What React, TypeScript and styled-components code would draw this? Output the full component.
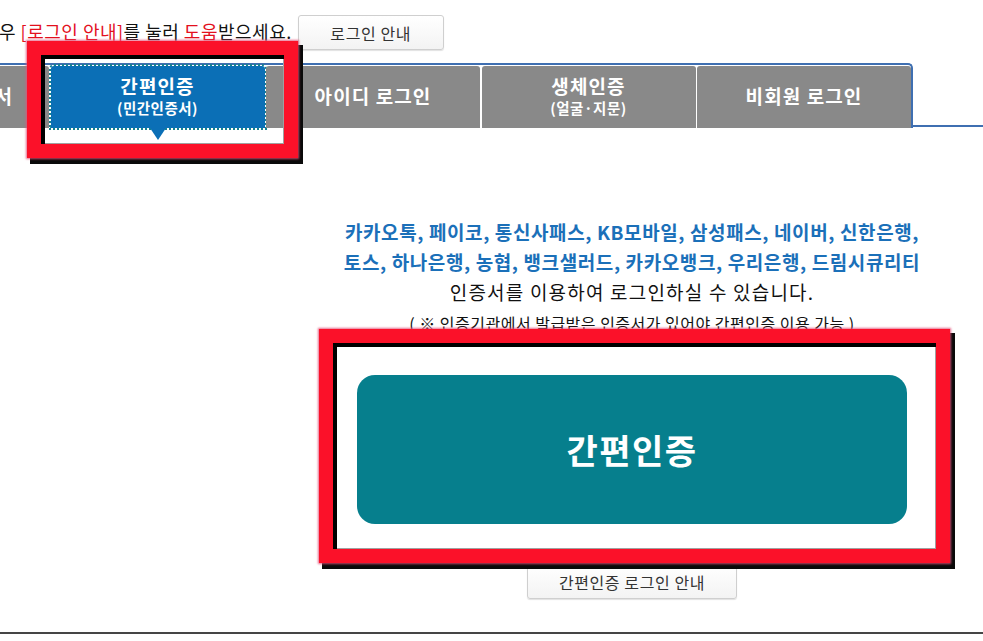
import React from "react";
import styled, { createGlobalStyle } from "styled-components";

const GlobalStyle = createGlobalStyle`
  html, body {
    margin: 0;
    padding: 0;
    background: #fff;
    overflow: hidden;
  }
  body {
    font-family: "Noto Sans CJK KR", "Noto Sans", sans-serif;
    color: #111;
  }
`;

const Page = styled.div`
  position: relative;
  width: 983px;
  height: 641px;
  overflow: hidden;
`;

const TopRow = styled.div`
  display: flex;
  align-items: center;
  gap: 6px;
  height: 35px;
  padding-top: 15px;
`;

const HelpText = styled.p`
  margin: -3px 0 0 -1px;
  font-size: 18px;
  line-height: 24px;
  white-space: nowrap;
  letter-spacing: 0.5px;
`;

const Red = styled.span`
  color: #e3101e;
`;

const GuideButton = styled.button<{ $w: number }>`
  width: ${(p) => p.$w}px;
  height: 35px;
  border: 1px solid #cfcfcf;
  border-radius: 3px;
  background: linear-gradient(#ffffff, #f3f3f3);
  box-shadow: 0 1px 1px rgba(0, 0, 0, 0.12);
  font-family: inherit;
  font-size: 16px;
  letter-spacing: 0.6px;
  color: #333;
  padding: 0;
  cursor: pointer;
`;

const TabBar = styled.div`
  display: flex;
  margin-top: 13px;
`;

const TabList = styled.ul`
  display: flex;
  gap: 1.5px;
  margin: 0 0 0 -165px;
  padding: 1px 0 0;
  list-style: none;
  border-top: 2px solid #3f6fb1;
  border-right: 2px solid #3f6fb1;
  border-top-right-radius: 5px;
`;

const Tab = styled.li<{ $active?: boolean }>`
  position: relative;
  width: 214px;
  height: 62px;
  box-sizing: border-box;
  padding-bottom: 3px;
  display: flex;
  flex-direction: column;
  align-items: center;
  justify-content: center;
  gap: 2px;
  background: ${(p) => (p.$active ? "#0b6fb6" : "#898989")};
  border-radius: 3px 3px 0 0;
  color: #fff;
  font-weight: 700;
  text-align: center;
  white-space: nowrap;
  ${(p) =>
    p.$active &&
    `
    outline: 2px dotted #16838f;
    &::after {
      content: "";
      position: absolute;
      left: 50%;
      bottom: -12px;
      margin-left: -8px;
      border-left: 8px solid transparent;
      border-right: 8px solid transparent;
      border-top: 12px solid #0b6fb6;
    }
  `}
`;

const TabTitle = styled.span`
  font-size: 19px;
  line-height: 22px;
  letter-spacing: 1.1px;
`;

const TabSub = styled.span`
  font-size: 14.5px;
  line-height: 18px;
  letter-spacing: 0.5px;
`;

const Filler = styled.div`
  flex: 1;
  height: 62px;
  border-bottom: 2px solid #3f6fb1;
`;

const Content = styled.section`
  width: 640px;
  margin: 89px 0 0 312px;
  display: flex;
  flex-direction: column;
  align-items: center;
  text-align: center;
`;

const Providers = styled.p`
  margin: 0;
  font-size: 19px;
  line-height: 30px;
  font-weight: 700;
  color: #1b70b9;
  letter-spacing: 0.6px;
  white-space: nowrap;
`;

const Lead = styled.p`
  margin: 0;
  font-size: 19px;
  line-height: 30px;
  letter-spacing: 1.2px;
  white-space: nowrap;
`;

const Note = styled.p`
  margin: 5px 0 0;
  font-size: 16px;
  line-height: 22px;
  white-space: nowrap;
  letter-spacing: 0.5px;
`;

const BigButton = styled.button`
  width: 550px;
  height: 149px;
  margin-top: 41px;
  border: 0;
  border-radius: 18px;
  background: #067f8d;
  color: #fff;
  font-family: inherit;
  font-size: 34px;
  font-weight: 700;
  letter-spacing: 1.5px;
  cursor: pointer;
`;

const GuideWrap = styled.div`
  margin-top: 40px;
`;

const Footer = styled.div`
  position: absolute;
  left: 0;
  right: 0;
  top: 632px;
  height: 2px;
  background: #454545;
`;

const Highlight = styled.div<{ $x: number; $y: number; $w: number; $h: number }>`
  position: absolute;
  left: ${(p) => p.$x}px;
  top: ${(p) => p.$y}px;
  width: ${(p) => p.$w}px;
  height: ${(p) => p.$h}px;
  box-sizing: border-box;
  border: 14px solid #fb1129;
  pointer-events: none;
  box-shadow:
    0 0 2px 1px rgba(226, 80, 120, 0.85),
    4px 5px 0 1px #0a0a0a,
    inset 4px 4px 0 #000,
    inset -1px -1px 0 #a0a0a0;
`;

export default function App() {
  return (
    <Page>
      <GlobalStyle />
      <TopRow>
        <HelpText>
          우 <Red>[로그인 안내]</Red>를 눌러 <Red>도움</Red>받으세요.
        </HelpText>
        <GuideButton $w={146}>로그인 안내</GuideButton>
      </TopRow>

      <TabBar>
        <TabList>
          <Tab>
            <TabTitle>공동·금융인증서</TabTitle>
          </Tab>
          <Tab $active>
            <TabTitle>간편인증</TabTitle>
            <TabSub>(민간인증서)</TabSub>
          </Tab>
          <Tab>
            <TabTitle>아이디 로그인</TabTitle>
          </Tab>
          <Tab>
            <TabTitle>생체인증</TabTitle>
            <TabSub>(얼굴·지문)</TabSub>
          </Tab>
          <Tab>
            <TabTitle>비회원 로그인</TabTitle>
          </Tab>
        </TabList>
        <Filler />
      </TabBar>

      <Content>
        <Providers>
          카카오톡, 페이코, 통신사패스, KB모바일, 삼성패스, 네이버, 신한은행,
        </Providers>
        <Providers>
          토스, 하나은행, 농협, 뱅크샐러드, 카카오뱅크, 우리은행, 드림시큐리티
        </Providers>
        <Lead>인증서를 이용하여 로그인하실 수 있습니다.</Lead>
        <Note>( ※ 인증기관에서 발급받은 인증서가 있어야 간편인증 이용 가능 )</Note>
        <BigButton>간편인증</BigButton>
        <GuideWrap>
          <GuideButton $w={210}>간편인증 로그인 안내</GuideButton>
        </GuideWrap>
      </Content>

      <Footer />

      <Highlight $x={27} $y={41} $w={271} $h={117} />
      <Highlight $x={319} $y={329} $w={631} $h={234} />
    </Page>
  );
}
